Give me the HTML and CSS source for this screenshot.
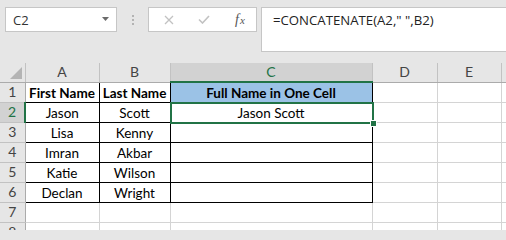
FILE: index.html
```html
<!DOCTYPE html>
<html>
<head>
<meta charset="utf-8">
<link rel="stylesheet" href="styles.css">
</head>
<body>
<div class="app">
  <div class="toolbar">
    <div class="namebox">
      <span class="ref">C2</span>
      <svg class="drop" width="7" height="4" viewBox="0 0 7 4"><path d="M0 0H7L3.5 4Z" fill="#6b6b6b"/></svg>
    </div>
    <div class="grip">
      <svg width="2" height="10" viewBox="0 0 2 10"><rect x="0" y="0" width="2" height="2" fill="#b3b3b3"/><rect x="0" y="4" width="2" height="2" fill="#b3b3b3"/><rect x="0" y="8" width="2" height="2" fill="#b3b3b3"/></svg>
    </div>
    <div class="fxbox">
      <svg class="ico" width="10" height="10" viewBox="0 0 10 10"><path d="M1 1L9 9M9 1L1 9" stroke="#c2c2c2" stroke-width="1.3" fill="none"/></svg>
      <svg class="ico" width="12" height="9" viewBox="0 0 12 9"><path d="M1 4.5L4.5 8L11 1" stroke="#c2c2c2" stroke-width="1.6" fill="none"/></svg>
      <span class="fx"><i>f</i><i class="x">x</i></span>
    </div>
    <div class="formula">=CONCATENATE(A2," ",B2)</div>
  </div>
  <table class="sheet">
    <colgroup>
      <col class="w-rh"><col class="w-a"><col class="w-b"><col class="w-c"><col class="w-d"><col class="w-e"><col class="w-f">
    </colgroup>
    <tr class="hdr">
      <th class="corner"><span class="tri"></span></th>
      <th>A</th><th>B</th><th class="sel-col">C</th><th>D</th><th>E</th><th></th>
    </tr>
    <tr>
      <th class="rh">1</th>
      <td class="d b">First Name</td><td class="d b">Last Name</td><td class="d b blue">Full Name in One Cell</td><td></td><td></td><td></td>
    </tr>
    <tr>
      <th class="rh sel-row">2</th>
      <td class="d">Jason</td><td class="d">Scott</td><td class="d active"><span class="selbox"></span><span class="handle"></span>Jason Scott</td><td></td><td></td><td></td>
    </tr>
    <tr>
      <th class="rh">3</th>
      <td class="d">Lisa</td><td class="d">Kenny</td><td class="d"></td><td></td><td></td><td></td>
    </tr>
    <tr>
      <th class="rh">4</th>
      <td class="d">Imran</td><td class="d">Akbar</td><td class="d"></td><td></td><td></td><td></td>
    </tr>
    <tr>
      <th class="rh">5</th>
      <td class="d">Katie</td><td class="d">Wilson</td><td class="d"></td><td></td><td></td><td></td>
    </tr>
    <tr>
      <th class="rh">6</th>
      <td class="d">Declan</td><td class="d">Wright</td><td class="d"></td><td></td><td></td><td></td>
    </tr>
    <tr>
      <th class="rh">7</th>
      <td></td><td></td><td></td><td></td><td></td><td></td>
    </tr>
    <tr>
      <th class="rh">8</th>
      <td></td><td></td><td></td><td></td><td></td><td></td>
    </tr>
  </table>
</div>
</body>
</html>
```

FILE: styles.css
```css
html, body {
  margin: 0;
  padding: 0;
  background: #e6e6e6;
  overflow: hidden;
}
.app {
  width: 506px;
  height: 230px;
  overflow: hidden;
  background: #e6e6e6;
}
.toolbar {
  display: flex;
  align-items: flex-start;
  padding: 7px 0 0 5px;
  height: 56px;
  box-sizing: border-box;
  font-family: "Open Sans", "Noto Sans", sans-serif;
}
.namebox {
  width: 112px;
  height: 25px;
  box-sizing: border-box;
  background: #fff;
  border: 1px solid #c6c6c6;
  display: flex;
  align-items: center;
  justify-content: space-between;
  padding: 0 7px 0 7px;
}
.ref {
  font-size: 13px;
  color: #333;
}
.drop { margin-top: -2px; }
.grip {
  width: 31px;
  height: 25px;
  display: flex;
  align-items: center;
  justify-content: center;
}
.fxbox {
  width: 109px;
  height: 25px;
  box-sizing: border-box;
  background: #fff;
  border: 1px solid #c6c6c6;
  display: flex;
  align-items: center;
  padding: 0 0 0 15px;
  gap: 24px;
}
.fx {
  font-family: "Liberation Serif", "DejaVu Serif", serif;
  font-size: 14px;
  color: #555;
  margin-left: 1px;
}
.fx .x { font-size: 11px; margin-left: 1px; }
.formula {
  flex: 1;
  margin-left: 4px;
  margin-right: -3px;
  height: 45px;
  box-sizing: border-box;
  background: #fff;
  border: 1px solid #c6c6c6;
  padding: 3px 0 0 11px;
  font-size: 13.2px;
  color: #222;
}
.sheet {
  border-collapse: collapse;
  table-layout: fixed;
  width: 530px;
  font-family: "Lato", "Liberation Sans", sans-serif;
  font-size: 13.5px;
  background: #fff;
  margin-top: 7px;
}
.w-rh { width: 25px; }
.w-a { width: 74px; }
.w-b { width: 71px; }
.w-c { width: 202px; }
.w-d { width: 65px; }
.w-e { width: 64px; }
.w-f { width: 29px; }
.sheet tr { height: 20px; }
.sheet td {
  border: 1px solid #d4d4d4;
  padding: 0 2px;
  text-align: center;
  white-space: nowrap;
  overflow: visible;
  color: #000;
  line-height: 18px;
  vertical-align: bottom;
}
.sheet tr.hdr { height: 19px; }
.sheet th {
  background: #e6e6e6;
  font-weight: normal;
  color: #444;
  font-size: 14px;
  padding: 0;
  line-height: 18px;
}
.hdr th {
  border-left: 1px solid #c2c2c2;
  border-right: 1px solid #c2c2c2;
  border-bottom: 1px solid #ababab;
  border-top: none;
}
.hdr th.corner {
  border-left: none;
  position: relative;
}
.tri {
  position: absolute;
  right: 3px;
  bottom: 3px;
  width: 0;
  height: 0;
  border-left: 12px solid transparent;
  border-bottom: 12px solid #b4b4b4;
}
.hdr th.sel-col {
  background: #d2d2d2;
  color: #217346;
  border-bottom: 2px solid #217346;
}
.sheet th.rh {
  border-right: 1px solid #ababab;
  border-top: 1px solid #c2c2c2;
  border-bottom: 1px solid #c2c2c2;
  border-left: none;
  text-align: center;
  color: #444;
}
.sheet th.rh.sel-row {
  background: #d2d2d2;
  border-right: 2px solid #217346;
  color: #217346;
}
.sheet td.d {
  border: 1px solid #000;
}
.sheet td.b { font-weight: bold; }
.sheet td.blue { background: #9bc2e6; }
.sheet td.active {
  position: relative;
}
.selbox {
  position: absolute;
  left: -1px;
  top: -1px;
  right: -2px;
  bottom: -2px;
  border: 2px solid #217346;
  pointer-events: none;
}
.handle {
  position: absolute;
  right: -5px;
  bottom: -5px;
  width: 5px;
  height: 5px;
  background: #217346;
  border: 1px solid #fff;
}
```
